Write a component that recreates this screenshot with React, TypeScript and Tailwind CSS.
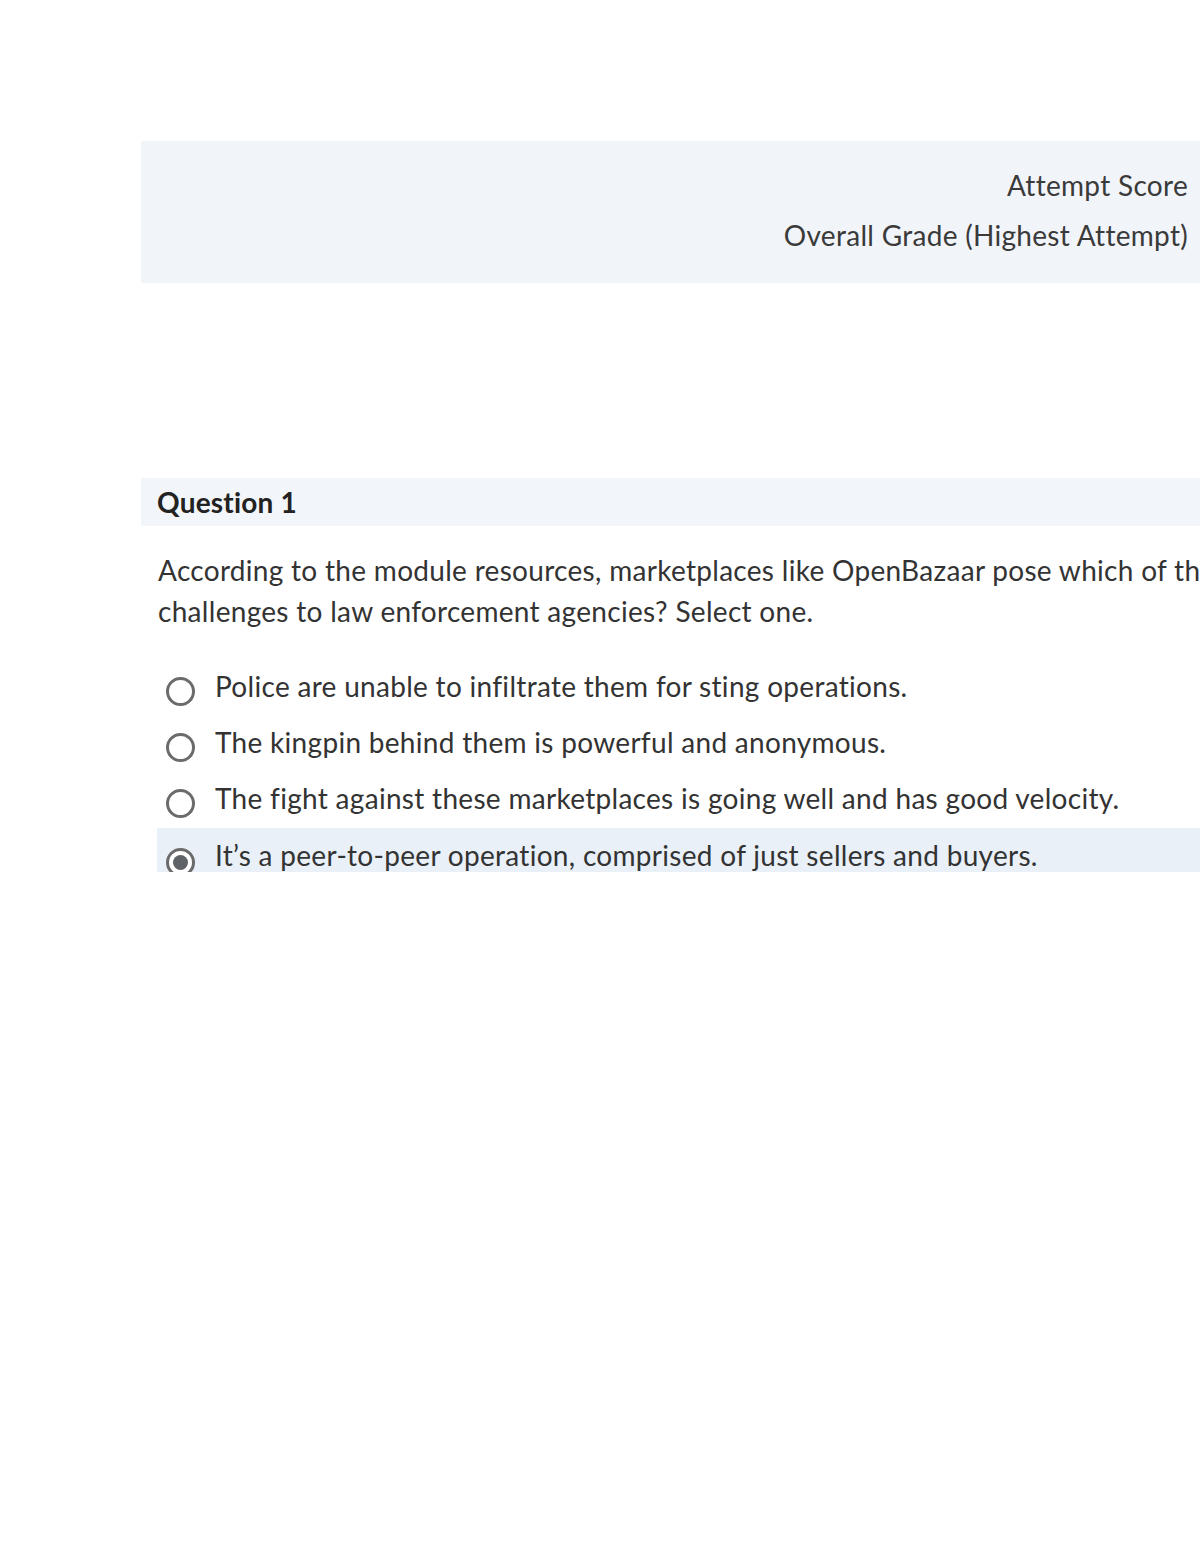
import React from "react";

function Radio({ checked }: { checked?: boolean }) {
  return (
    <span className="relative flex h-[29px] w-[29px] shrink-0 items-center justify-center rounded-full border-[3px] border-[#6b6b6b] bg-white">
      {checked && <span className="h-[15px] w-[15px] rounded-full bg-[#5f6368]" />}
    </span>
  );
}

export default function App() {
  const options = [
    "Police are unable to infiltrate them for sting operations.",
    "The kingpin behind them is powerful and anonymous.",
    "The fight against these marketplaces is going well and has good velocity.",
  ];
  return (
    <div
      className="relative h-[1553px] w-[1200px] overflow-hidden bg-white text-[#333333]"
      style={{ fontFamily: "Lato, 'Open Sans', sans-serif" }}
    >
      <div className="ml-[141px] mt-[141px] flex h-[142px] flex-col items-end bg-[#f1f4f9] pr-[12px] pt-[25px] text-[28px] leading-[38px] tracking-[0.3px] text-[#3a3a3a]">
        <div>Attempt Score</div>
        <div className="mt-[12px]">Overall Grade (Highest Attempt)</div>
      </div>

      <div className="ml-[141px] mt-[195px] flex h-[48px] items-center bg-[#f2f5fa] pl-[16px] text-[28px] font-bold tracking-[0.2px] text-[#222]">
        Question 1
      </div>

      <div className="ml-[158px] mt-[24px] whitespace-nowrap text-[28px] leading-[41px] tracking-[0.3px]">
        <div>According to the module resources, marketplaces like OpenBazaar pose which of the following</div>
        <div>challenges to law enforcement agencies? Select one.</div>
      </div>

      <div className="ml-[157px] mt-[26px] flex flex-col">
        {options.map((o) => (
          <div key={o} className="flex h-[56px] items-center whitespace-nowrap text-[28px] leading-[32px] tracking-[0.3px]">
            <span className="ml-[9px] mt-[10px]">
              <Radio />
            </span>
            <span className="ml-[20px]">{o}</span>
          </div>
        ))}
        <div className="mt-[2px] h-[44px] overflow-hidden bg-[#e9f0f8]">
          <div className="flex items-start whitespace-nowrap pt-[11px] text-[28px] leading-[32px] tracking-[0.3px]">
            <span className="ml-[9px] mt-[9px]">
              <Radio checked />
            </span>
            <span className="ml-[20px]">It’s a peer-to-peer operation, comprised of just sellers and buyers.</span>
          </div>
        </div>
      </div>
    </div>
  );
}
